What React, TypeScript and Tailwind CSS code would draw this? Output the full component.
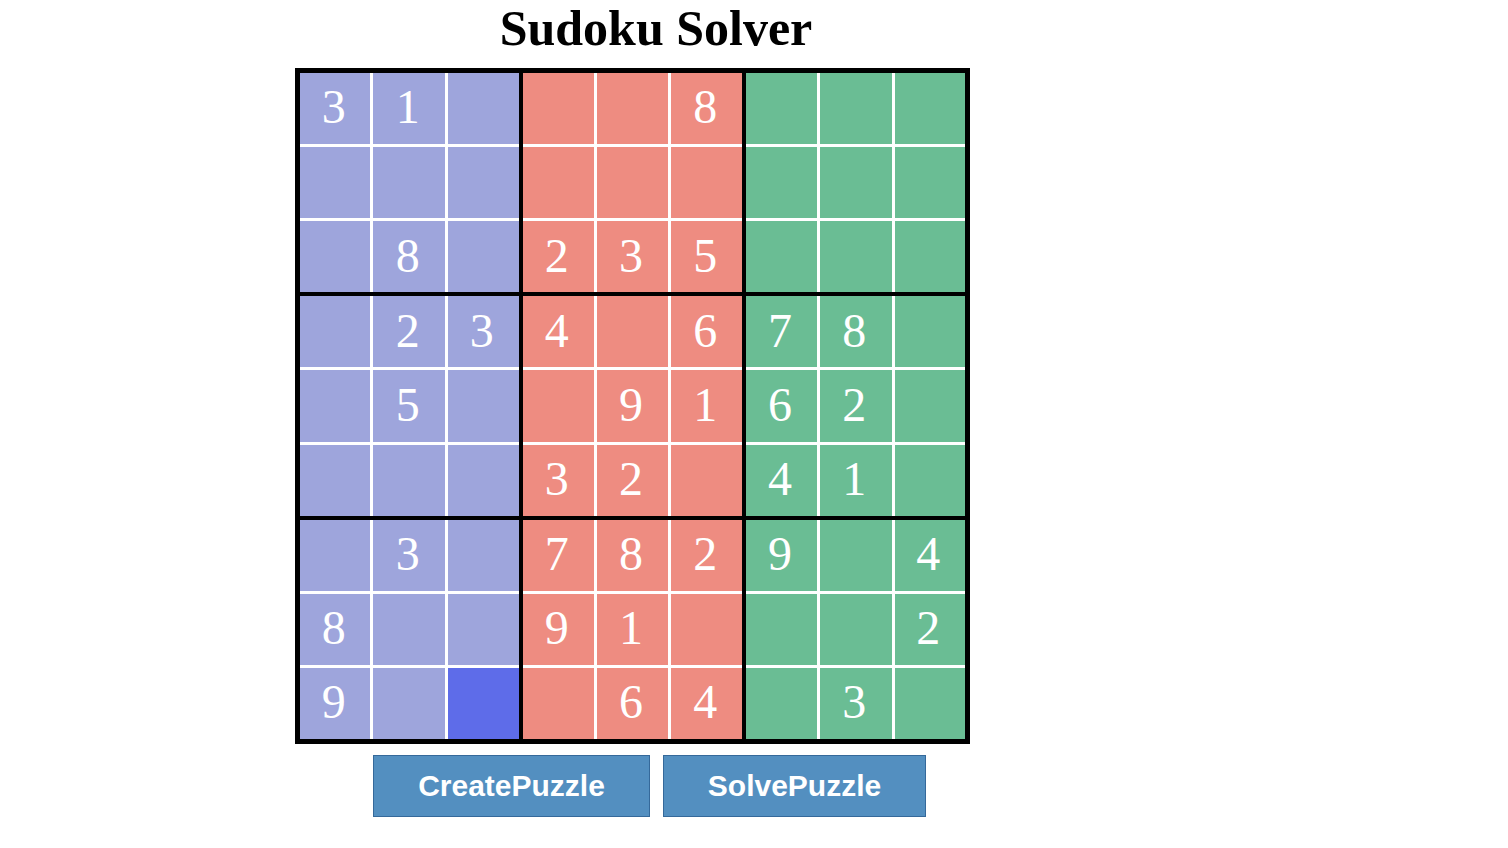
import React from "react";

const board: string[] = [
  "31___8___",
  "_________",
  "_8_235___",
  "_234_678_",
  "_5__9162_",
  "___32_41_",
  "_3_7829_4",
  "8__91___2",
  "9___64_3_",
];

const colBg = (c: number) =>
  c < 3 ? "bg-[#9ea5dc]" : c < 6 ? "bg-[#ee8c81]" : "bg-[#6abd94]";

export default function App() {
  return (
    <div className="min-h-screen bg-white">
      <div className="ml-[295px] w-[675px]">
        <h1
          className="pl-[47px] text-center text-[50px] font-bold leading-[57px] text-black"
          style={{ fontFamily: '"Liberation Serif", "Times New Roman", serif' }}
        >
          Sudoku Solver
        </h1>
        <table
          className="mt-[11px] w-[675px] table-fixed border-collapse border-[5px] border-black"
          style={{ fontFamily: '"Liberation Serif", "Times New Roman", serif' }}
        >
          <tbody>
            {board.map((row, r) => (
              <tr key={r}>
                {row.split("").map((ch, c) => {
                  const hl = r === 8 && c === 2;
                  return (
                    <td
                      key={c}
                      className={`h-[74.5px] border-[3px] border-white p-0 pb-[2px] pr-[3px] text-center align-middle text-[48px] leading-none text-white ${
                        hl ? "bg-[#5e6ce9]" : colBg(c)
                      } ${c === 2 || c === 5 ? "border-r-[4px] border-r-black" : ""} ${
                        r === 2 || r === 5 ? "border-b-[4px] border-b-black" : ""
                      } ${c === 0 ? "border-l-[5px] border-l-black" : ""} ${
                        c === 8 ? "border-r-[5px] border-r-black" : ""
                      } ${r === 0 ? "border-t-[5px] border-t-black" : ""} ${
                        r === 8 ? "border-b-[5px] border-b-black" : ""
                      }`}
                    >
                      {ch === "_" ? "" : ch}
                    </td>
                  );
                })}
              </tr>
            ))}
          </tbody>
        </table>
        <div
          className="ml-[78px] mt-[11px] flex gap-[13px]"
          style={{ fontFamily: '"Liberation Sans", Arial, sans-serif' }}
        >
          <button className="h-[62px] w-[277px] border border-[#35699a] bg-[#538fc0] text-[30px] font-bold text-white">
            CreatePuzzle
          </button>
          <button className="h-[62px] w-[263px] border border-[#35699a] bg-[#538fc0] text-[30px] font-bold text-white">
            SolvePuzzle
          </button>
        </div>
      </div>
    </div>
  );
}
